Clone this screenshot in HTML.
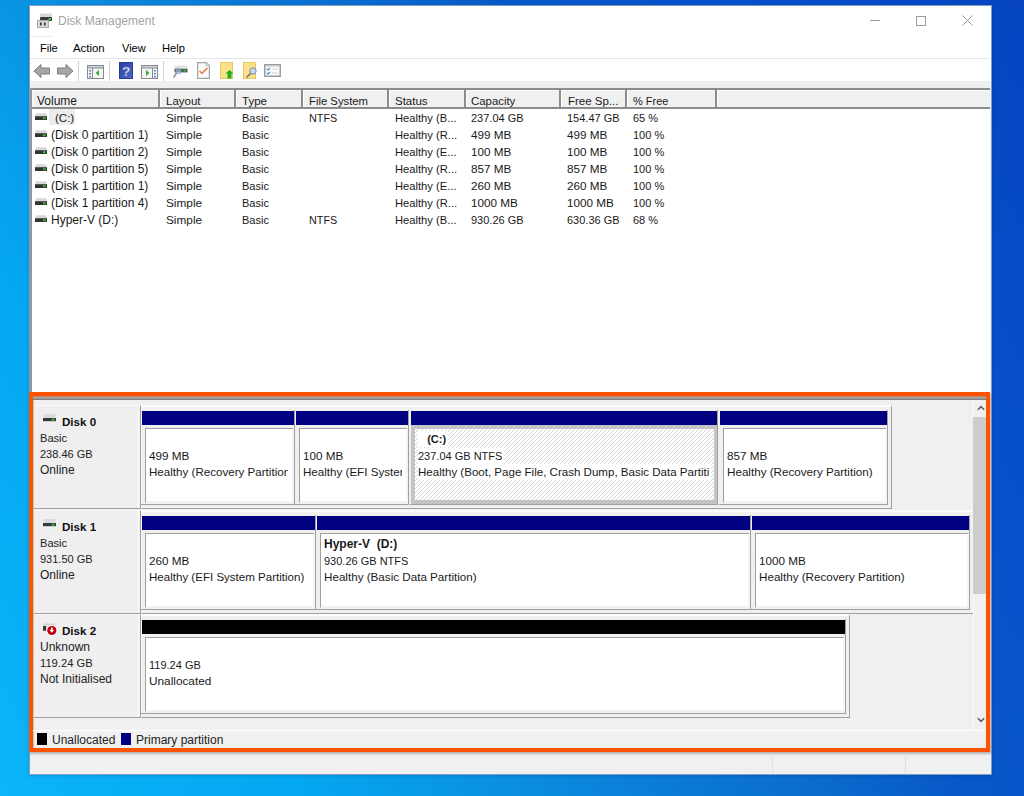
<!DOCTYPE html><html><head><meta charset="utf-8"><style>
*{margin:0;padding:0;box-sizing:border-box}
html,body{width:1024px;height:796px;overflow:hidden}
body{position:relative;font-family:"Liberation Sans",sans-serif;font-size:11.5px;color:#000;
background:linear-gradient(60deg,#0cb4f8 0%,#04a8f2 20%,#0a92e2 33%,#0a78d6 47%,#0a6cce 55%,#0858c8 65%,#0650cc 80%,#0644c0 100%)}
.a{position:absolute}
.t{position:absolute;white-space:pre;line-height:14px}
svg{position:absolute;overflow:visible}
</style></head><body>
<div class="a" style="left:29px;top:5px;width:963px;height:770px;background:#f0f0f0;border:1px solid #7f9ec4;box-shadow:0 1px 3px rgba(0,0,0,.15)"></div>
<div class="a" style="left:30px;top:6px;width:961px;height:75px;background:#fff"></div>
<svg style="left:37px;top:13px" width="16" height="15" viewBox="0 0 16 15">
<rect x="3" y="0.5" width="12" height="4" rx="1" fill="#d8d8d8"/>
<rect x="3" y="4" width="12" height="4" rx="1" fill="#3a3a3a"/>
<rect x="11.5" y="5" width="2.5" height="2" fill="#3ec43e"/>
<rect x="0.5" y="7.5" width="11" height="7" fill="#d6d6d6" stroke="#a8a8a8" stroke-width="1"/>
<rect x="3" y="9.5" width="1.6" height="3" fill="#3a3030"/>
<rect x="7" y="9.5" width="1.6" height="3" fill="#3a3030"/>
</svg>
<div class="t" style="left:58px;top:14px;font-size:12px;color:#a4a4a4;font-weight:400;">Disk Management</div>
<div class="a" style="left:870px;top:20px;width:10px;height:1px;background:#999"></div>
<div class="a" style="left:916px;top:16px;width:10px;height:10px;border:1px solid #9c9c9c"></div>
<svg style="left:962px;top:15px" width="11" height="11" viewBox="0 0 11 11"><path d="M0.5 0.5L10.5 10.5M10.5 0.5L0.5 10.5" stroke="#9a9a9a" stroke-width="1"/></svg>
<div class="a" style="left:30px;top:36px;width:22px;height:1px;background:#ececec"></div>
<div class="t" style="left:40px;top:41px;font-size:11px;color:#000;font-weight:400;">File</div>
<div class="t" style="left:73px;top:41px;font-size:11.4px;color:#000;font-weight:400;">Action</div>
<div class="t" style="left:122px;top:41px;font-size:11px;color:#000;font-weight:400;">View</div>
<div class="t" style="left:162px;top:41px;font-size:11.2px;color:#000;font-weight:400;">Help</div>
<div class="a" style="left:30px;top:58px;width:960px;height:1px;background:#e6e6e6"></div>
<svg style="left:33px;top:63px" width="18" height="16" viewBox="0 0 18 16">
<path d="M1 8L8 1.5V5H16.5V11H8V14.5Z" fill="#a6a6a6" stroke="#7e7e7e" stroke-width="1"/></svg>
<svg style="left:56px;top:63px" width="18" height="16" viewBox="0 0 18 16">
<path d="M17 8L10 1.5V5H1.5V11H10V14.5Z" fill="#a6a6a6" stroke="#7e7e7e" stroke-width="1"/></svg>
<div class="a" style="left:78px;top:61px;width:1px;height:20px;background:#d4d4d4"></div>
<svg style="left:87px;top:65px" width="18" height="14" viewBox="0 0 18 14">
<rect x="0.5" y="0.5" width="16" height="13" fill="#f4f4f4" stroke="#8a8a8a"/>
<rect x="0.5" y="0.5" width="16" height="2.5" fill="#c8d4e4" stroke="#8a8a8a"/>
<rect x="2" y="5" width="2" height="1.5" fill="#5a8ad0"/><rect x="2" y="8" width="2" height="1.5" fill="#5a8ad0"/><rect x="2" y="11" width="2" height="1.5" fill="#5a8ad0"/>
<line x1="5.5" y1="3" x2="5.5" y2="13.5" stroke="#8a8a8a"/>
<path d="M12 5L8.5 8L12 11Z" fill="#35b035"/></svg>
<div class="a" style="left:109px;top:61px;width:1px;height:20px;background:#d4d4d4"></div>
<svg style="left:119px;top:62px" width="14" height="17" viewBox="0 0 14 17">
<defs><linearGradient id="hg" x1="0" y1="0" x2="1" y2="1"><stop offset="0" stop-color="#2a3c9c"/><stop offset="1" stop-color="#4a6ad0"/></linearGradient></defs>
<rect x="0.5" y="0.5" width="13" height="16" fill="url(#hg)" stroke="#2a3a90"/>
<text x="7" y="13.5" font-family="Liberation Sans" font-weight="700" font-size="13.5" fill="#e8ecf4" stroke="#7080b0" stroke-width="0.4" text-anchor="middle">?</text></svg>
<svg style="left:141px;top:65px" width="18" height="14" viewBox="0 0 18 14">
<rect x="0.5" y="0.5" width="16" height="13" fill="#f4f4f4" stroke="#8a8a8a"/>
<rect x="0.5" y="0.5" width="16" height="2.5" fill="#c8d4e4" stroke="#8a8a8a"/>
<rect x="13" y="5" width="2" height="1.5" fill="#5a8ad0"/><rect x="13" y="8" width="2" height="1.5" fill="#5a8ad0"/><rect x="13" y="11" width="2" height="1.5" fill="#5a8ad0"/>
<line x1="11.5" y1="3" x2="11.5" y2="13.5" stroke="#8a8a8a"/>
<path d="M5 5L8.5 8L5 11Z" fill="#35b035"/></svg>
<div class="a" style="left:163px;top:61px;width:1px;height:20px;background:#d4d4d4"></div>
<svg style="left:172px;top:65px" width="17" height="14" viewBox="0 0 17 14">
<rect x="2.5" y="0.5" width="13" height="3.5" rx="1" fill="#e4e4e4"/>
<rect x="2.5" y="3.8" width="13" height="3.6" fill="#505050"/>
<rect x="11.5" y="4.6" width="2.5" height="2" fill="#30c030"/>
<circle cx="6.5" cy="6" r="2.8" fill="rgba(190,215,245,0.55)" stroke="rgba(110,145,195,0.75)" stroke-width="0.9"/>
<line x1="4.5" y1="8" x2="1.5" y2="12.5" stroke="#8a9098" stroke-width="1.4"/></svg>
<svg style="left:197px;top:62px" width="13" height="17" viewBox="0 0 13 17">
<path d="M0.6 0.6H9.2L12.4 3.8V16.4H0.6Z" fill="#fafafa" stroke="#a4a4a4" stroke-width="1.2"/><path d="M9.2 0.6V3.8H12.4" fill="#e0e0e0" stroke="#b0b0b0" stroke-width="0.8"/>
<path d="M2.5 9L5 11.3L10.5 6" fill="none" stroke="#f07040" stroke-width="1.5"/></svg>
<svg style="left:220px;top:62px" width="14" height="17" viewBox="0 0 14 17">
<rect x="0.5" y="0.5" width="12" height="16" fill="#fde08a" stroke="#e8c860"/>
<path d="M9.5 8L13.5 11.5H11.5V16.5H7.5V11.5H5.5Z" fill="#20b020"/></svg>
<svg style="left:243px;top:62px" width="15" height="17" viewBox="0 0 15 17">
<rect x="0.5" y="0.5" width="12" height="16" fill="#fde08a" stroke="#e8c860"/>
<circle cx="10" cy="9" r="3.2" fill="#c8daf0" stroke="#7a8aa0" stroke-width="1"/>
<line x1="7.6" y1="11.4" x2="3.5" y2="15.5" stroke="#7a7a7a" stroke-width="1.6"/></svg>
<svg style="left:264px;top:64px" width="17" height="13" viewBox="0 0 17 13">
<rect x="0.75" y="0.75" width="15.5" height="11.5" fill="#fafafa" stroke="#9c9c9c" stroke-width="1.5"/>
<rect x="1.5" y="1.5" width="14" height="1" fill="#c8c8c8"/>
<path d="M2.8 4.8L4 6L6 4M2.8 8.8L4 10L6 8" fill="none" stroke="#4090d8" stroke-width="1.1"/>
<rect x="8" y="4.5" width="6" height="1" fill="#d0d0d0"/><rect x="8" y="8.5" width="6" height="1" fill="#d0d0d0"/></svg>
<div class="a" style="left:30px;top:81px;width:960px;height:7px;background:#efefef"></div>
<div class="a" style="left:30px;top:88px;width:960px;height:21px;background:#f0f0f0;border-top:2px solid #8c8c8c;border-bottom:2px solid #8c8c8c"></div>
<div class="a" style="left:32px;top:90px;width:958px;height:1px;background:#fafafa"></div>
<div class="a" style="left:32px;top:90px;width:1px;height:17px;background:#fafafa"></div>
<div class="a" style="left:158px;top:90px;width:3px;height:17px;background:#8c8c8c;border-right:1px solid #fff"></div>
<div class="a" style="left:234px;top:90px;width:3px;height:17px;background:#8c8c8c;border-right:1px solid #fff"></div>
<div class="a" style="left:301px;top:90px;width:3px;height:17px;background:#8c8c8c;border-right:1px solid #fff"></div>
<div class="a" style="left:387px;top:90px;width:3px;height:17px;background:#8c8c8c;border-right:1px solid #fff"></div>
<div class="a" style="left:464px;top:90px;width:3px;height:17px;background:#8c8c8c;border-right:1px solid #fff"></div>
<div class="a" style="left:559px;top:90px;width:3px;height:17px;background:#8c8c8c;border-right:1px solid #fff"></div>
<div class="a" style="left:625px;top:90px;width:3px;height:17px;background:#8c8c8c;border-right:1px solid #fff"></div>
<div class="a" style="left:715px;top:90px;width:3px;height:17px;background:#8c8c8c;border-right:1px solid #fff"></div>
<div class="t" style="left:37px;top:94px;font-size:12px;color:#1a1a1a;font-weight:400;">Volume</div>
<div class="t" style="left:166px;top:94px;font-size:11.5px;color:#1a1a1a;font-weight:400;">Layout</div>
<div class="t" style="left:242px;top:94px;font-size:11.5px;color:#1a1a1a;font-weight:400;">Type</div>
<div class="t" style="left:309px;top:94px;font-size:11.3px;color:#1a1a1a;font-weight:400;">File System</div>
<div class="t" style="left:395px;top:94px;font-size:11.5px;color:#1a1a1a;font-weight:400;">Status</div>
<div class="t" style="left:471px;top:94px;font-size:11.4px;color:#1a1a1a;font-weight:400;">Capacity</div>
<div class="t" style="left:568px;top:94px;font-size:11.5px;color:#1a1a1a;font-weight:400;">Free Sp...</div>
<div class="t" style="left:633px;top:94px;font-size:11px;color:#1a1a1a;font-weight:400;">% Free</div>
<div class="a" style="left:30px;top:109px;width:960px;height:283px;background:#fff"></div>
<div class="a" style="left:30px;top:88px;width:2px;height:304px;background:#969696"></div>
<svg style="left:35px;top:113px" width="12" height="8" viewBox="0 0 12 8">
<rect x="0.5" y="0.3" width="11" height="3" rx="1" fill="#d8d8d8"/>
<rect x="0" y="3.2" width="12" height="3.8" fill="#333"/>
<rect x="8" y="4.2" width="2.6" height="2" fill="#30c030"/></svg>
<div class="a" style="left:49px;top:109px;width:26px;height:16px;background:#ececec"></div>
<div class="t" style="left:55px;top:111px;font-size:11.5px;color:#1a1a1a;font-weight:400;">(C:)</div>
<div class="t" style="left:166px;top:111px;font-size:11.8px;color:#1a1a1a;font-weight:400;">Simple</div>
<div class="t" style="left:242px;top:111px;font-size:11px;color:#1a1a1a;font-weight:400;">Basic</div>
<div class="t" style="left:309px;top:111px;font-size:10.8px;color:#1a1a1a;font-weight:400;">NTFS</div>
<div class="t" style="left:395px;top:111px;font-size:11.2px;color:#1a1a1a;font-weight:400;">Healthy (B...</div>
<div class="t" style="left:471px;top:111px;font-size:11px;color:#1a1a1a;font-weight:400;">237.04 GB</div>
<div class="t" style="left:567px;top:111px;font-size:11px;color:#1a1a1a;font-weight:400;">154.47 GB</div>
<div class="t" style="left:633px;top:111px;font-size:11px;color:#1a1a1a;font-weight:400;">65 %</div>
<svg style="left:35px;top:130px" width="12" height="8" viewBox="0 0 12 8">
<rect x="0.5" y="0.3" width="11" height="3" rx="1" fill="#d8d8d8"/>
<rect x="0" y="3.2" width="12" height="3.8" fill="#333"/>
<rect x="8" y="4.2" width="2.6" height="2" fill="#30c030"/></svg>
<div class="t" style="left:51px;top:128px;font-size:12px;color:#1a1a1a;font-weight:400;">(Disk 0 partition 1)</div>
<div class="t" style="left:166px;top:128px;font-size:11.8px;color:#1a1a1a;font-weight:400;">Simple</div>
<div class="t" style="left:242px;top:128px;font-size:11px;color:#1a1a1a;font-weight:400;">Basic</div>
<div class="t" style="left:395px;top:128px;font-size:11.2px;color:#1a1a1a;font-weight:400;">Healthy (R...</div>
<div class="t" style="left:471px;top:128px;font-size:11.7px;color:#1a1a1a;font-weight:400;">499 MB</div>
<div class="t" style="left:567px;top:128px;font-size:11.7px;color:#1a1a1a;font-weight:400;">499 MB</div>
<div class="t" style="left:633px;top:128px;font-size:11px;color:#1a1a1a;font-weight:400;">100 %</div>
<svg style="left:35px;top:147px" width="12" height="8" viewBox="0 0 12 8">
<rect x="0.5" y="0.3" width="11" height="3" rx="1" fill="#d8d8d8"/>
<rect x="0" y="3.2" width="12" height="3.8" fill="#333"/>
<rect x="8" y="4.2" width="2.6" height="2" fill="#30c030"/></svg>
<div class="t" style="left:51px;top:145px;font-size:12px;color:#1a1a1a;font-weight:400;">(Disk 0 partition 2)</div>
<div class="t" style="left:166px;top:145px;font-size:11.8px;color:#1a1a1a;font-weight:400;">Simple</div>
<div class="t" style="left:242px;top:145px;font-size:11px;color:#1a1a1a;font-weight:400;">Basic</div>
<div class="t" style="left:395px;top:145px;font-size:11.2px;color:#1a1a1a;font-weight:400;">Healthy (E...</div>
<div class="t" style="left:471px;top:145px;font-size:11.7px;color:#1a1a1a;font-weight:400;">100 MB</div>
<div class="t" style="left:567px;top:145px;font-size:11.7px;color:#1a1a1a;font-weight:400;">100 MB</div>
<div class="t" style="left:633px;top:145px;font-size:11px;color:#1a1a1a;font-weight:400;">100 %</div>
<svg style="left:35px;top:164px" width="12" height="8" viewBox="0 0 12 8">
<rect x="0.5" y="0.3" width="11" height="3" rx="1" fill="#d8d8d8"/>
<rect x="0" y="3.2" width="12" height="3.8" fill="#333"/>
<rect x="8" y="4.2" width="2.6" height="2" fill="#30c030"/></svg>
<div class="t" style="left:51px;top:162px;font-size:12px;color:#1a1a1a;font-weight:400;">(Disk 0 partition 5)</div>
<div class="t" style="left:166px;top:162px;font-size:11.8px;color:#1a1a1a;font-weight:400;">Simple</div>
<div class="t" style="left:242px;top:162px;font-size:11px;color:#1a1a1a;font-weight:400;">Basic</div>
<div class="t" style="left:395px;top:162px;font-size:11.2px;color:#1a1a1a;font-weight:400;">Healthy (R...</div>
<div class="t" style="left:471px;top:162px;font-size:11.7px;color:#1a1a1a;font-weight:400;">857 MB</div>
<div class="t" style="left:567px;top:162px;font-size:11.7px;color:#1a1a1a;font-weight:400;">857 MB</div>
<div class="t" style="left:633px;top:162px;font-size:11px;color:#1a1a1a;font-weight:400;">100 %</div>
<svg style="left:35px;top:181px" width="12" height="8" viewBox="0 0 12 8">
<rect x="0.5" y="0.3" width="11" height="3" rx="1" fill="#d8d8d8"/>
<rect x="0" y="3.2" width="12" height="3.8" fill="#333"/>
<rect x="8" y="4.2" width="2.6" height="2" fill="#30c030"/></svg>
<div class="t" style="left:51px;top:179px;font-size:12px;color:#1a1a1a;font-weight:400;">(Disk 1 partition 1)</div>
<div class="t" style="left:166px;top:179px;font-size:11.8px;color:#1a1a1a;font-weight:400;">Simple</div>
<div class="t" style="left:242px;top:179px;font-size:11px;color:#1a1a1a;font-weight:400;">Basic</div>
<div class="t" style="left:395px;top:179px;font-size:11.2px;color:#1a1a1a;font-weight:400;">Healthy (E...</div>
<div class="t" style="left:471px;top:179px;font-size:11.7px;color:#1a1a1a;font-weight:400;">260 MB</div>
<div class="t" style="left:567px;top:179px;font-size:11.7px;color:#1a1a1a;font-weight:400;">260 MB</div>
<div class="t" style="left:633px;top:179px;font-size:11px;color:#1a1a1a;font-weight:400;">100 %</div>
<svg style="left:35px;top:198px" width="12" height="8" viewBox="0 0 12 8">
<rect x="0.5" y="0.3" width="11" height="3" rx="1" fill="#d8d8d8"/>
<rect x="0" y="3.2" width="12" height="3.8" fill="#333"/>
<rect x="8" y="4.2" width="2.6" height="2" fill="#30c030"/></svg>
<div class="t" style="left:51px;top:196px;font-size:12px;color:#1a1a1a;font-weight:400;">(Disk 1 partition 4)</div>
<div class="t" style="left:166px;top:196px;font-size:11.8px;color:#1a1a1a;font-weight:400;">Simple</div>
<div class="t" style="left:242px;top:196px;font-size:11px;color:#1a1a1a;font-weight:400;">Basic</div>
<div class="t" style="left:395px;top:196px;font-size:11.2px;color:#1a1a1a;font-weight:400;">Healthy (R...</div>
<div class="t" style="left:471px;top:196px;font-size:11.7px;color:#1a1a1a;font-weight:400;">1000 MB</div>
<div class="t" style="left:567px;top:196px;font-size:11.7px;color:#1a1a1a;font-weight:400;">1000 MB</div>
<div class="t" style="left:633px;top:196px;font-size:11px;color:#1a1a1a;font-weight:400;">100 %</div>
<svg style="left:35px;top:215px" width="12" height="8" viewBox="0 0 12 8">
<rect x="0.5" y="0.3" width="11" height="3" rx="1" fill="#d8d8d8"/>
<rect x="0" y="3.2" width="12" height="3.8" fill="#333"/>
<rect x="8" y="4.2" width="2.6" height="2" fill="#30c030"/></svg>
<div class="t" style="left:51px;top:213px;font-size:12px;color:#1a1a1a;font-weight:400;">Hyper-V (D:)</div>
<div class="t" style="left:166px;top:213px;font-size:11.8px;color:#1a1a1a;font-weight:400;">Simple</div>
<div class="t" style="left:242px;top:213px;font-size:11px;color:#1a1a1a;font-weight:400;">Basic</div>
<div class="t" style="left:309px;top:213px;font-size:10.8px;color:#1a1a1a;font-weight:400;">NTFS</div>
<div class="t" style="left:395px;top:213px;font-size:11.2px;color:#1a1a1a;font-weight:400;">Healthy (B...</div>
<div class="t" style="left:471px;top:213px;font-size:11px;color:#1a1a1a;font-weight:400;">930.26 GB</div>
<div class="t" style="left:567px;top:213px;font-size:11px;color:#1a1a1a;font-weight:400;">630.36 GB</div>
<div class="t" style="left:633px;top:213px;font-size:11px;color:#1a1a1a;font-weight:400;">68 %</div>
<div class="a" style="left:29px;top:392px;width:961px;height:360px;border:4px solid #fd5200;background:#f0f0f0;box-shadow:1px 2px 2px rgba(0,0,0,.25), inset 1px 1px 1px rgba(0,0,0,.12)"></div>
<div class="a" style="left:33px;top:396px;width:953px;height:1px;background:#c88060"></div>
<div class="a" style="left:33px;top:397px;width:953px;height:1px;background:#a8a8a8"></div>
<div class="a" style="left:33px;top:398px;width:953px;height:1px;background:#959595"></div>
<div class="a" style="left:33px;top:399px;width:953px;height:1px;background:#828282"></div>
<div class="a" style="left:33px;top:405px;width:108px;height:104px;background:#efefef;border-top:1px solid #fbfbfb;border-right:1px solid #a0a0a0;border-bottom:1px solid #a0a0a0"></div>
<div class="a" style="left:138px;top:406px;width:1px;height:102px;background:#fafafa"></div>
<svg style="left:43px;top:414px" width="13" height="8" viewBox="0 0 13 8">
<rect x="0.5" y="0" width="12" height="4.2" rx="1" fill="#d8dce0"/>
<rect x="0" y="4" width="13" height="3.2" fill="#3a3a3a"/>
<rect x="8.8" y="4.6" width="2.6" height="2" fill="#30c030"/></svg>
<div class="t" style="left:62px;top:415px;font-size:11.6px;color:#111;font-weight:700;">Disk 0</div>
<div class="t" style="left:40px;top:431px;font-size:11.1px;color:#222;font-weight:400;">Basic</div>
<div class="t" style="left:40px;top:447px;font-size:11px;color:#222;font-weight:400;">238.46 GB</div>
<div class="t" style="left:40px;top:463px;font-size:12px;color:#222;font-weight:400;">Online</div>
<div class="a" style="left:141px;top:405px;width:751px;height:104px;background:#f0f0f0;border-top:2px solid #fcfcfc;border-left:1px solid #fafafa;border-right:1px solid #a0a0a0;border-bottom:1px solid #a0a0a0"></div>
<div class="a" style="left:294px;top:410px;width:1px;height:95px;background:#a0a0a0"></div>
<div class="a" style="left:142px;top:411px;width:152px;height:14px;background:#000080"></div>
<div class="a" style="left:141px;top:504px;width:154px;height:1px;background:#a0a0a0"></div>
<div class="a" style="left:145px;top:428px;width:149px;height:76px;background:#fff;border-top:1px solid #a0a0a0;border-left:1px solid #a0a0a0;border-right:2px solid #f4f4f4;border-bottom:3px solid #f2f2f2"></div>
<div class="t" style="left:149px;top:449px;font-size:11.7px;color:#1a1a1a;font-weight:400;width:139px;overflow:hidden;">499 MB</div>
<div class="t" style="left:149px;top:465px;font-size:11.6px;color:#1a1a1a;font-weight:400;width:139px;overflow:hidden;">Healthy (Recovery Partition)</div>
<div class="a" style="left:408px;top:410px;width:1px;height:95px;background:#a0a0a0"></div>
<div class="a" style="left:296px;top:411px;width:112px;height:14px;background:#000080"></div>
<div class="a" style="left:295px;top:504px;width:114px;height:1px;background:#a0a0a0"></div>
<div class="a" style="left:299px;top:428px;width:109px;height:76px;background:#fff;border-top:1px solid #a0a0a0;border-left:1px solid #a0a0a0;border-right:2px solid #f4f4f4;border-bottom:3px solid #f2f2f2"></div>
<div class="t" style="left:303px;top:449px;font-size:11.7px;color:#1a1a1a;font-weight:400;width:99px;overflow:hidden;">100 MB</div>
<div class="t" style="left:303px;top:465px;font-size:11.6px;color:#1a1a1a;font-weight:400;width:99px;overflow:hidden;">Healthy (EFI System Partition)</div>
<div class="a" style="left:717px;top:410px;width:1px;height:95px;background:#a0a0a0"></div>
<div class="a" style="left:411px;top:411px;width:306px;height:14px;background:#000080"></div>
<div class="a" style="left:411px;top:425px;width:306px;height:79px;background:#c4c4c4"></div>
<svg style="left:415px;top:429px" width="299" height="71"><defs><pattern id="hp411" patternUnits="userSpaceOnUse" width="4" height="4"><rect width="4" height="4" fill="#fff"/><rect x="0" y="3" width="1" height="1" fill="#d6d6d6"/><rect x="1" y="2" width="1" height="1" fill="#d6d6d6"/><rect x="2" y="1" width="1" height="1" fill="#d6d6d6"/><rect x="3" y="0" width="1" height="1" fill="#d6d6d6"/></pattern></defs><rect width="299" height="71" fill="url(#hp411)" shape-rendering="crispEdges"/></svg>
<div class="a" style="left:410px;top:504px;width:308px;height:1px;background:#a0a0a0"></div>
<div class="t" style="left:418px;top:431px;font-size:11px;color:#1a1a1a;font-weight:700;background:#fff;line-height:16px;padding-right:2px;">   (C:)</div>
<div class="t" style="left:418px;top:448px;font-size:11px;color:#1a1a1a;font-weight:400;background:#fff;line-height:16px;padding-right:2px;">237.04 GB NTFS</div>
<div class="t" style="left:418px;top:464px;font-size:11.55px;color:#1a1a1a;font-weight:400;background:#fff;line-height:16px;padding-right:2px;">Healthy (Boot, Page File, Crash Dump, Basic Data Partiti</div>
<div class="a" style="left:887px;top:410px;width:1px;height:95px;background:#a0a0a0"></div>
<div class="a" style="left:720px;top:411px;width:167px;height:14px;background:#000080"></div>
<div class="a" style="left:719px;top:504px;width:169px;height:1px;background:#a0a0a0"></div>
<div class="a" style="left:723px;top:428px;width:164px;height:76px;background:#fff;border-top:1px solid #a0a0a0;border-left:1px solid #a0a0a0;border-right:2px solid #f4f4f4;border-bottom:3px solid #f2f2f2"></div>
<div class="t" style="left:727px;top:449px;font-size:11.7px;color:#1a1a1a;font-weight:400;width:154px;overflow:hidden;">857 MB</div>
<div class="t" style="left:727px;top:465px;font-size:11.65px;color:#1a1a1a;font-weight:400;width:154px;overflow:hidden;">Healthy (Recovery Partition)</div>
<div class="a" style="left:33px;top:510px;width:108px;height:104px;background:#efefef;border-top:1px solid #fbfbfb;border-right:1px solid #a0a0a0;border-bottom:1px solid #a0a0a0"></div>
<div class="a" style="left:138px;top:511px;width:1px;height:102px;background:#fafafa"></div>
<svg style="left:43px;top:519px" width="13" height="8" viewBox="0 0 13 8">
<rect x="0.5" y="0" width="12" height="4.2" rx="1" fill="#d8dce0"/>
<rect x="0" y="4" width="13" height="3.2" fill="#3a3a3a"/>
<rect x="8.8" y="4.6" width="2.6" height="2" fill="#30c030"/></svg>
<div class="t" style="left:62px;top:520px;font-size:11.6px;color:#111;font-weight:700;">Disk 1</div>
<div class="t" style="left:40px;top:536px;font-size:11.1px;color:#222;font-weight:400;">Basic</div>
<div class="t" style="left:40px;top:552px;font-size:11px;color:#222;font-weight:400;">931.50 GB</div>
<div class="t" style="left:40px;top:568px;font-size:12px;color:#222;font-weight:400;">Online</div>
<div class="a" style="left:141px;top:510px;width:834px;height:104px;background:#f0f0f0;border-top:2px solid #fcfcfc;border-left:1px solid #fafafa;border-right:1px solid #a0a0a0;border-bottom:1px solid #a0a0a0"></div>
<div class="a" style="left:315px;top:515px;width:1px;height:95px;background:#a0a0a0"></div>
<div class="a" style="left:142px;top:516px;width:173px;height:14px;background:#000080"></div>
<div class="a" style="left:141px;top:609px;width:175px;height:1px;background:#a0a0a0"></div>
<div class="a" style="left:145px;top:533px;width:170px;height:76px;background:#fff;border-top:1px solid #a0a0a0;border-left:1px solid #a0a0a0;border-right:2px solid #f4f4f4;border-bottom:3px solid #f2f2f2"></div>
<div class="t" style="left:149px;top:554px;font-size:11.7px;color:#1a1a1a;font-weight:400;width:160px;overflow:hidden;">260 MB</div>
<div class="t" style="left:149px;top:570px;font-size:11.55px;color:#1a1a1a;font-weight:400;width:160px;overflow:hidden;">Healthy (EFI System Partition)</div>
<div class="a" style="left:750px;top:515px;width:1px;height:95px;background:#a0a0a0"></div>
<div class="a" style="left:317px;top:516px;width:433px;height:14px;background:#000080"></div>
<div class="a" style="left:316px;top:609px;width:435px;height:1px;background:#a0a0a0"></div>
<div class="a" style="left:320px;top:533px;width:430px;height:76px;background:#fff;border-top:1px solid #a0a0a0;border-left:1px solid #a0a0a0;border-right:2px solid #f4f4f4;border-bottom:3px solid #f2f2f2"></div>
<div class="t" style="left:324px;top:537px;font-size:12px;color:#1a1a1a;font-weight:700;width:420px;overflow:hidden;">Hyper-V  (D:)</div>
<div class="t" style="left:324px;top:554px;font-size:11px;color:#1a1a1a;font-weight:400;width:420px;overflow:hidden;">930.26 GB NTFS</div>
<div class="t" style="left:324px;top:570px;font-size:11.65px;color:#1a1a1a;font-weight:400;width:420px;overflow:hidden;">Healthy (Basic Data Partition)</div>
<div class="a" style="left:969px;top:515px;width:1px;height:95px;background:#a0a0a0"></div>
<div class="a" style="left:752px;top:516px;width:217px;height:14px;background:#000080"></div>
<div class="a" style="left:751px;top:609px;width:219px;height:1px;background:#a0a0a0"></div>
<div class="a" style="left:755px;top:533px;width:214px;height:76px;background:#fff;border-top:1px solid #a0a0a0;border-left:1px solid #a0a0a0;border-right:2px solid #f4f4f4;border-bottom:3px solid #f2f2f2"></div>
<div class="t" style="left:759px;top:554px;font-size:11.7px;color:#1a1a1a;font-weight:400;width:204px;overflow:hidden;">1000 MB</div>
<div class="t" style="left:759px;top:570px;font-size:11.65px;color:#1a1a1a;font-weight:400;width:204px;overflow:hidden;">Healthy (Recovery Partition)</div>
<div class="a" style="left:33px;top:614px;width:108px;height:104px;background:#efefef;border-top:1px solid #fbfbfb;border-right:1px solid #a0a0a0;border-bottom:1px solid #a0a0a0"></div>
<div class="a" style="left:138px;top:615px;width:1px;height:102px;background:#fafafa"></div>
<svg style="left:42px;top:622px" width="16" height="16" viewBox="0 0 16 16">
<rect x="1.5" y="1.5" width="11" height="2.2" fill="#d2d2d2"/>
<rect x="1" y="4" width="3.2" height="4.8" fill="#3a3a3a"/>
<circle cx="9.8" cy="8.5" r="5.4" fill="#fff" opacity="0.9"/>
<circle cx="9.8" cy="8.5" r="4.6" fill="#c0000e"/>
<path d="M9 5.4H10.6V7.8H12.2L9.8 10.8L7.4 7.8H9Z" fill="#fff"/></svg>
<div class="t" style="left:62px;top:624px;font-size:11.6px;color:#111;font-weight:700;">Disk 2</div>
<div class="t" style="left:40px;top:640px;font-size:12px;color:#222;font-weight:400;">Unknown</div>
<div class="t" style="left:40px;top:656px;font-size:11.2px;color:#222;font-weight:400;">119.24 GB</div>
<div class="t" style="left:40px;top:672px;font-size:12px;color:#222;font-weight:400;">Not Initialised</div>
<div class="a" style="left:141px;top:614px;width:709px;height:104px;background:#f0f0f0;border-top:2px solid #fcfcfc;border-left:1px solid #fafafa;border-right:1px solid #a0a0a0;border-bottom:1px solid #a0a0a0"></div>
<div class="a" style="left:845px;top:619px;width:1px;height:95px;background:#a0a0a0"></div>
<div class="a" style="left:142px;top:620px;width:703px;height:14px;background:#000000"></div>
<div class="a" style="left:141px;top:713px;width:705px;height:1px;background:#a0a0a0"></div>
<div class="a" style="left:145px;top:637px;width:700px;height:76px;background:#fff;border-top:1px solid #a0a0a0;border-left:1px solid #a0a0a0;border-right:2px solid #f4f4f4;border-bottom:3px solid #f2f2f2"></div>
<div class="t" style="left:149px;top:658px;font-size:11px;color:#1a1a1a;font-weight:400;width:690px;overflow:hidden;">119.24 GB</div>
<div class="t" style="left:149px;top:674px;font-size:11.8px;color:#1a1a1a;font-weight:400;width:690px;overflow:hidden;">Unallocated</div>
<div class="a" style="left:33px;top:400px;width:1px;height:348px;background:#c4c4c4"></div>
<div class="a" style="left:973px;top:400px;width:13px;height:330px;background:#f0f0f0;border-left:1px solid #fafafa"></div>
<div class="a" style="left:973px;top:417px;width:13px;height:177px;background:#cdcdcd"></div>
<svg style="left:977px;top:405px" width="8" height="6" viewBox="0 0 8 6"><path d="M0.8 4.8L4 1.6L7.2 4.8" fill="none" stroke="#606060" stroke-width="1.5"/></svg>
<svg style="left:977px;top:717px" width="8" height="6" viewBox="0 0 8 6"><path d="M0.8 1.2L4 4.4L7.2 1.2" fill="none" stroke="#606060" stroke-width="1.5"/></svg>
<div class="a" style="left:33px;top:730px;width:953px;height:1px;background:#fff"></div>
<div class="a" style="left:37px;top:733px;width:10px;height:12px;background:#000"></div>
<div class="t" style="left:52px;top:733px;font-size:12px;color:#222;font-weight:400;">Unallocated</div>
<div class="a" style="left:121px;top:733px;width:10px;height:12px;background:#000080"></div>
<div class="t" style="left:136px;top:733px;font-size:12px;color:#222;font-weight:400;">Primary partition</div>
<div class="a" style="left:772px;top:754px;width:1px;height:20px;background:#e0e0e0"></div>
<div class="a" style="left:905px;top:754px;width:1px;height:20px;background:#e0e0e0"></div>
</body></html>
